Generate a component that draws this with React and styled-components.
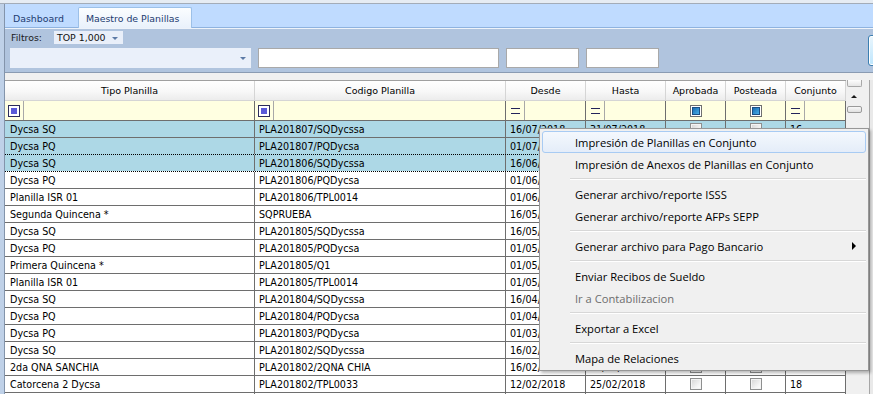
import React from "react";
import styled, { createGlobalStyle } from "styled-components";

const GlobalStyle = createGlobalStyle`
  html, body { margin: 0; padding: 0; overflow: hidden; background: #f0f0f0; }
  body { font-family: "DejaVu Sans", Tahoma, sans-serif; }
`;

const COLS = "250px 251px 80px 80px 60px 60px 60px";

const rows = [
  ["Dycsa SQ", "PLA201807/SQDycssa", "16/07/2018", "31/07/2018", "16"],
  ["Dycsa PQ", "PLA201807/PQDycsa", "01/07/2018", "15/07/2018", "15"],
  ["Dycsa SQ", "PLA201806/SQDycssa", "16/06/2018", "30/06/2018", "14"],
  ["Dycsa PQ", "PLA201806/PQDycsa", "01/06/2018", "15/06/2018", "13"],
  ["Planilla ISR 01", "PLA201806/TPL0014", "01/06/2018", "30/06/2018", "12"],
  ["Segunda Quincena *", "SQPRUEBA", "16/05/2018", "31/05/2018", ""],
  ["Dycsa SQ", "PLA201805/SQDycssa", "16/05/2018", "31/05/2018", "11"],
  ["Dycsa PQ", "PLA201805/PQDycsa", "01/05/2018", "15/05/2018", "10"],
  ["Primera Quincena *", "PLA201805/Q1", "01/05/2018", "15/05/2018", ""],
  ["Planilla ISR 01", "PLA201805/TPL0014", "01/05/2018", "31/05/2018", "9"],
  ["Dycsa SQ", "PLA201804/SQDycssa", "16/04/2018", "30/04/2018", "8"],
  ["Dycsa PQ", "PLA201804/PQDycsa", "01/04/2018", "15/04/2018", "7"],
  ["Dycsa PQ", "PLA201803/PQDycsa", "01/03/2018", "15/03/2018", "6"],
  ["Dycsa SQ", "PLA201802/SQDycssa", "16/02/2018", "28/02/2018", "5"],
  ["2da QNA SANCHIA", "PLA201802/2QNA CHIA", "16/02/2018", "28/02/2018", ""],
  ["Catorcena 2 Dycsa", "PLA201802/TPL0033", "12/02/2018", "25/02/2018", "18"],
  ["", "", "", "", ""],
];

const menu = [
  { label: "Impresión de Planillas en Conjunto", active: true },
  { label: "Impresión de Anexos de Planillas en Conjunto" },
  "sep",
  { label: "Generar archivo/reporte ISSS" },
  { label: "Generar archivo/reporte AFPs SEPP" },
  "sep",
  { label: "Generar archivo para Pago Bancario", sub: true },
  "sep",
  { label: "Enviar Recibos de Sueldo" },
  { label: "Ir a Contabilizacion", disabled: true },
  "sep",
  { label: "Exportar a Excel" },
  "sep",
  { label: "Mapa de Relaciones" },
];

export default function App() {
  return (
    <>
      <GlobalStyle />
      <Page>
        <TopStrip />
        <Body>
          <LeftStrip />
          <Main>
            <TabBar>
              <Tab>Dashboard</Tab>
              <Tab $active>Maestro de Planillas</Tab>
            </TabBar>
            <FilterPanel>
              <FilterFields>
                <FieldRow>
                  <Label>Filtros:</Label>
                  <TopSelect>
                    TOP 1,000
                    <SmallArrow />
                  </TopSelect>
                </FieldRow>
                <InputsRow>
                  <Combo>
                    <SmallArrow />
                  </Combo>
                  <TextBox $w={241} />
                  <TextBox $w={73} />
                  <TextBox $w={73} />
                </InputsRow>
              </FilterFields>
              <SearchButton />
            </FilterPanel>
            <Spacer />
            <GridArea>
              <Grid>
                <HeaderRow>
                  <HeaderCell>Tipo Planilla</HeaderCell>
                  <HeaderCell>Codigo Planilla</HeaderCell>
                  <HeaderCell>Desde</HeaderCell>
                  <HeaderCell>Hasta</HeaderCell>
                  <HeaderCell>Aprobada</HeaderCell>
                  <HeaderCell>Posteada</HeaderCell>
                  <HeaderCell>Conjunto</HeaderCell>
                </HeaderRow>
                <FilterRow>
                  <FilterCell>
                    <OpBox><SquareOp /></OpBox>
                  </FilterCell>
                  <FilterCell>
                    <OpBox><SquareOp /></OpBox>
                  </FilterCell>
                  <FilterCell>
                    <OpBox><EqualOp /></OpBox>
                  </FilterCell>
                  <FilterCell>
                    <OpBox><EqualOp /></OpBox>
                  </FilterCell>
                  <FilterCell $center>
                    <BlueCheck />
                  </FilterCell>
                  <FilterCell $center>
                    <BlueCheck />
                  </FilterCell>
                  <FilterCell>
                    <OpBox><EqualOp /></OpBox>
                  </FilterCell>
                </FilterRow>
                {rows.map((r, i) => (
                  <Row key={i} $selected={i < 3} $focused={i === 2}>
                    <Cell $first>{r[0]}</Cell>
                    <Cell>{r[1]}</Cell>
                    <Cell>{r[2]}</Cell>
                    <Cell>{r[3]}</Cell>
                    <Cell $center><Check /></Cell>
                    <Cell $center><Check /></Cell>
                    <Cell>{r[4]}</Cell>
                  </Row>
                ))}
              </Grid>
              <ScrollCol>
                <ScrollCap />
                <UpArrow />
                <Thumb />
              </ScrollCol>
              <Gutter />
              <Edge />
            </GridArea>
          </Main>
        </Body>

        <ContextMenu>
          {menu.map((m, i) =>
            m === "sep" ? (
              <Separator key={i} />
            ) : (
              <MenuItem key={i} $active={m.active} $disabled={m.disabled}>
                {m.label}
                {m.sub && <SubArrow />}
              </MenuItem>
            )
          )}
        </ContextMenu>
      </Page>
    </>
  );
}

const Page = styled.div`
  width: 873px;
  height: 394px;
  position: relative;
  overflow: hidden;
  display: flex;
  flex-direction: column;
  background: #f0f0f0;
`;

const TopStrip = styled.div`
  height: 3px;
  flex-shrink: 0;
  background: #e6ecf3;
  border-bottom: 1px solid #a3acb8;
`;

const Body = styled.div`
  flex: 1;
  display: flex;
  min-height: 0;
`;

const LeftStrip = styled.div`
  width: 4px;
  flex-shrink: 0;
  background: #bfd1e8;
`;

const Main = styled.div`
  flex: 1;
  min-width: 0;
  display: flex;
  flex-direction: column;
  border-left: 1px solid #8394ab;
`;

const TabBar = styled.div`
  height: 23px;
  flex-shrink: 0;
  display: flex;
  align-items: flex-end;
  background: #bfdbff;
  border-bottom: 1px solid #8fb3df;
`;

const Tab = styled.div`
  height: 20px;
  margin-bottom: -1px;
  margin-right: 2px;
  padding: 0 11px 0 7px;
  display: flex;
  align-items: center;
  font-size: 9.4px;
  color: #1c3a70;
  border: 1px solid ${(p) => (p.$active ? "#9cc0e8" : "transparent")};
  border-bottom: none;
  border-radius: 2px 2px 0 0;
  background: ${(p) =>
    p.$active ? "linear-gradient(#fbfdff, #e9f1fb)" : "transparent"};
`;

const FilterPanel = styled.div`
  height: 45px;
  flex-shrink: 0;
  display: flex;
  padding: 2px 0 0 5px;
  box-sizing: border-box;
  background: #b0c4de;
  border-top: 1px solid #eef3fa;
  border-bottom: 1px solid #8a9bb2;
  overflow: hidden;
`;

const FilterFields = styled.div`
  display: flex;
  flex-direction: column;
`;

const FieldRow = styled.div`
  height: 13px;
  display: flex;
  align-items: center;
`;

const Label = styled.div`
  width: 43px;
  padding-left: 1px;
  font-size: 9.4px;
  color: #1a1a1a;
`;

const SmallArrow = styled.span`
  position: absolute;
  right: 5px;
  top: 50%;
  margin-top: -1px;
  border-left: 3px solid transparent;
  border-right: 3px solid transparent;
  border-top: 3px solid #5c7aa6;
`;

const TopSelect = styled.div`
  position: relative;
  width: 69px;
  height: 13px;
  line-height: 13px;
  padding-left: 3px;
  box-sizing: border-box;
  font-size: 9.4px;
  color: #111;
  background: #e9eff9;
`;

const InputsRow = styled.div`
  margin-top: 4px;
  height: 20px;
  display: flex;
  gap: 7px;
`;

const Combo = styled.div`
  position: relative;
  width: 241px;
  height: 20px;
  background: #eaf0fa;
`;

const TextBox = styled.div`
  width: ${(p) => p.$w}px;
  height: 20px;
  box-sizing: border-box;
  background: #ffffff;
  border: 1px solid #a9a9a9;
`;

const SearchButton = styled.div`
  flex-shrink: 0;
  margin-left: auto;
  margin-top: 4px;
  margin-right: -25px;
  width: 30px;
  height: 31px;
  box-sizing: border-box;
  border: 1px solid #3c7fb1;
  border-radius: 3px;
  background: linear-gradient(#eaf6fd, #bee6fd);
  box-shadow: inset 0 0 0 1px #ffffff;
`;

const Spacer = styled.div`
  height: 7px;
  flex-shrink: 0;
`;

const GridArea = styled.div`
  flex: 1;
  display: flex;
  min-height: 0;
`;

const Grid = styled.div`
  width: 841px;
  flex-shrink: 0;
  border-top: 1px solid #a0a0a0;
  overflow: hidden;
`;

const HeaderRow = styled.div`
  display: grid;
  grid-template-columns: ${COLS};
  height: 20px;
  box-sizing: border-box;
  border-bottom: 1px solid #d5d5d5;
  background: linear-gradient(#ffffff 0%, #f8f8f8 55%, #ececec 100%);
`;

const HeaderCell = styled.div`
  display: flex;
  align-items: center;
  justify-content: center;
  border-right: 1px solid #d5d5d5;
  font-size: 9.5px;
  color: #000;
  white-space: nowrap;
`;

const FilterRow = styled.div`
  display: grid;
  grid-template-columns: ${COLS};
  height: 20px;
  box-sizing: border-box;
  border-bottom: 1px solid #6e6e6e;
  background: #ffffe1;
`;

const FilterCell = styled.div`
  display: flex;
  align-items: center;
  justify-content: ${(p) => (p.$center ? "center" : "flex-start")};
  border-right: 1px solid #6e6e6e;
`;

const OpBox = styled.div`
  width: 19px;
  height: 100%;
  box-sizing: border-box;
  border-right: 1px solid #a8a8a8;
  display: flex;
  align-items: center;
  justify-content: center;
`;

const SquareOp = styled.div`
  width: 12px;
  height: 12px;
  box-sizing: border-box;
  border: 1px solid #2c2c5c;
  background: #ffffff;
  display: flex;
  align-items: center;
  justify-content: center;
  &::after {
    content: "";
    width: 6px;
    height: 6px;
    background: #5a5ad8;
  }
`;

const EqualOp = styled.div`
  width: 9px;
  height: 4px;
  border-top: 1px solid #23235a;
  border-bottom: 1px solid #23235a;
`;

const BlueCheck = styled.div`
  width: 12px;
  height: 12px;
  box-sizing: border-box;
  border: 1px solid #6f6f6f;
  background: #ffffff;
  padding: 1px;
  &::after {
    content: "";
    display: block;
    width: 100%;
    height: 100%;
    box-sizing: border-box;
    border: 1px solid #1c4f86;
    background: linear-gradient(135deg, #1b6cb2, #48aee8);
  }
`;

const Row = styled.div`
  position: relative;
  display: grid;
  grid-template-columns: ${COLS};
  height: 17px;
  box-sizing: border-box;
  border-bottom: 1px solid #6e6e6e;
  background: ${(p) => (p.$selected ? "#add8e6" : "#ffffff")};
  &::before {
    content: "";
    display: ${(p) => (p.$focused ? "block" : "none")};
    position: absolute;
    left: 0;
    right: 0;
    top: -1px;
    height: 1px;
    background: repeating-linear-gradient(90deg, #000 0 1px, #add8e6 1px 2px);
  }
  &::after {
    content: "";
    display: ${(p) => (p.$focused ? "block" : "none")};
    position: absolute;
    left: 0;
    right: 0;
    bottom: -1px;
    height: 1px;
    background: repeating-linear-gradient(90deg, #000 0 1px, #ffffff 1px 2px);
  }
`;

const Cell = styled.div`
  display: flex;
  align-items: center;
  justify-content: ${(p) => (p.$center ? "center" : "flex-start")};
  padding-left: ${(p) => (p.$center ? 0 : p.$first ? 5 : 4)}px;
  border-right: 1px solid #6e6e6e;
  font-size: 9.6px;
  color: #000;
  white-space: nowrap;
  overflow: hidden;
`;

const Check = styled.div`
  width: 12px;
  height: 12px;
  box-sizing: border-box;
  border: 1px solid #8e8f8f;
  background: linear-gradient(135deg, #d4d4d4, #f6f6f6 70%, #ffffff);
  box-shadow: inset 0 0 0 1px #f4f4f4;
`;

const ScrollCol = styled.div`
  width: 16px;
  flex-shrink: 0;
  display: flex;
  flex-direction: column;
  align-items: center;
`;

const ScrollCap = styled.div`
  width: 15px;
  height: 7px;
  box-sizing: border-box;
  border: 1px solid #a8a8a8;
  border-top: none;
  border-radius: 0 0 2px 2px;
  background: linear-gradient(#fdfdfd, #e6e6e6);
`;

const UpArrow = styled.div`
  margin-top: 8px;
  border-left: 3px solid transparent;
  border-right: 3px solid transparent;
  border-bottom: 3px solid #1a1a1a;
`;

const Thumb = styled.div`
  margin-top: 8px;
  width: 15px;
  height: 7px;
  box-sizing: border-box;
  border: 1px solid #9a9a9a;
  border-radius: 2px;
  background: linear-gradient(#f8f8f8, #e0e0e0);
`;

const Gutter = styled.div`
  width: 7px;
  flex-shrink: 0;
`;

const Edge = styled.div`
  flex: 1;
  border-left: 1px solid #a6a6a6;
  background: #e9e9e9;
`;

const ContextMenu = styled.div`
  position: absolute;
  left: 539px;
  top: 128px;
  width: 330px;
  box-sizing: border-box;
  padding: 2px 2px 1px 2px;
  background: #f0f0f0;
  border: 1px solid #979797;
  box-shadow: 2px 2px 3px rgba(0, 0, 0, 0.28);
  font-family: "Open Sans", "Noto Sans", sans-serif;
  font-size: 11.2px;
`;

const MenuItem = styled.div`
  position: relative;
  height: 22px;
  box-sizing: border-box;
  padding-left: 32px;
  display: flex;
  align-items: center;
  white-space: nowrap;
  color: ${(p) => (p.$disabled ? "#6d6d6d" : "#000000")};
  border: 1px solid ${(p) => (p.$active ? "#a8cbf3" : "transparent")};
  border-radius: 3px;
  background: ${(p) =>
    p.$active ? "linear-gradient(#f4f8fd, #e4edf9)" : "transparent"};
`;

const SubArrow = styled.span`
  position: absolute;
  right: 9px;
  top: 50%;
  margin-top: -4px;
  border-top: 4px solid transparent;
  border-bottom: 4px solid transparent;
  border-left: 4px solid #000;
`;

const Separator = styled.div`
  height: 0;
  margin: 3px 0 3px 28px;
  border-top: 1px solid #d7d7d7;
  border-bottom: 1px solid #ffffff;
`;
